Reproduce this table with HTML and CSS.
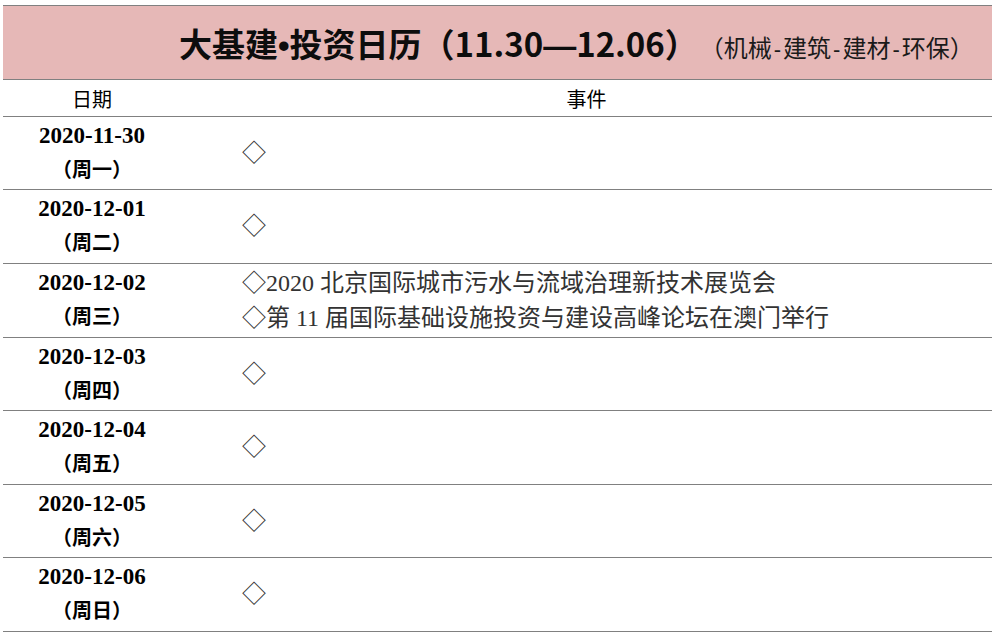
FILE: index.html
```html
<!DOCTYPE html>
<html lang="zh-CN">
<head>
<meta charset="utf-8">
<title>大基建•投资日历</title>
<link rel="stylesheet" href="styles.css">
</head>
<body>
<div class="sheet">
  <div class="title-row">
    <span class="title">大基建<span class="latin">•</span>投资日历（11.30<span class="latin">—</span>12.06）</span>
    <span class="subtitle">（机械<span class="hy">-</span>建筑<span class="hy">-</span>建材<span class="hy">-</span>环保）</span>
  </div>
  <div class="row head">
    <div class="c-date">日期</div>
    <div class="c-event center">事件</div>
  </div>
  <div class="row h73">
    <div class="c-date"><div class="d">2020-11-30</div><div class="w">（周一）</div></div>
    <div class="c-event"><div class="e">◇</div></div>
  </div>
  <div class="row h74">
    <div class="c-date"><div class="d">2020-12-01</div><div class="w">（周二）</div></div>
    <div class="c-event"><div class="e">◇</div></div>
  </div>
  <div class="row h74">
    <div class="c-date"><div class="d">2020-12-02</div><div class="w">（周三）</div></div>
    <div class="c-event"><div class="e">◇2020 北京国际城市污水与流域治理新技术展览会</div><div class="e">◇第 11 届国际基础设施投资与建设高峰论坛在澳门举行</div></div>
  </div>
  <div class="row h73">
    <div class="c-date"><div class="d">2020-12-03</div><div class="w">（周四）</div></div>
    <div class="c-event"><div class="e">◇</div></div>
  </div>
  <div class="row h74">
    <div class="c-date"><div class="d">2020-12-04</div><div class="w">（周五）</div></div>
    <div class="c-event"><div class="e">◇</div></div>
  </div>
  <div class="row h73">
    <div class="c-date"><div class="d">2020-12-05</div><div class="w">（周六）</div></div>
    <div class="c-event"><div class="e">◇</div></div>
  </div>
  <div class="row h74">
    <div class="c-date"><div class="d">2020-12-06</div><div class="w">（周日）</div></div>
    <div class="c-event"><div class="e">◇</div></div>
  </div>
</div>
</body>
</html>
```

FILE: styles.css
```css
html, body {
  margin: 0;
  padding: 0;
  background: #ffffff;
}
.sheet {
  width: 989px;
  margin: 5px 0 0 3px;
  font-family: "Liberation Serif", "Noto Sans CJK SC", serif;
  color: #000;
}
.title-row {
  box-sizing: border-box;
  height: 75px;
  border-top: 1px solid #808080;
  border-bottom: 1px solid #808080;
  background: #e6b8b7;
  display: flex;
  align-items: baseline;
  padding: 13px 0 0 176px;
}
.title {
  font-family: "Noto Sans CJK SC", sans-serif;
  font-weight: 700;
  font-size: 33px;
  color: #0d0d0d;
}
.title .latin {
  font-family: "Liberation Sans", sans-serif;
}
.subtitle {
  font-family: "Noto Sans CJK SC", sans-serif;
  font-size: 24px;
  color: #1a1a1a;
  margin-left: 2px;
}
.subtitle .hy {
  font-family: "Liberation Sans", sans-serif;
  font-size: 22px;
  margin: 0 2px;
}
.row {
  box-sizing: border-box;
  display: flex;
  border-bottom: 1px solid #808080;
}
.head {
  height: 37px;
  align-items: center;
  font-family: "Noto Sans CJK SC", sans-serif;
  font-size: 20px;
}
.h73 { height: 73px; }
.h74 { height: 74px; }
.c-date {
  width: 178px;
  flex: none;
  display: flex;
  flex-direction: column;
  align-items: center;
  justify-content: center;
}
.c-event {
  flex: 1;
  display: flex;
  flex-direction: column;
  justify-content: center;
  padding-left: 61px;
}
.c-event.center {
  align-items: center;
  padding-left: 0;
}
.d {
  font-family: "Liberation Serif", serif;
  font-weight: 700;
  font-size: 23px;
  line-height: 33px;
  margin-top: -3px;
}
.w {
  font-family: "Noto Sans CJK SC", sans-serif;
  font-weight: 700;
  font-size: 20px;
  line-height: 33px;
}
.e {
  font-family: "Liberation Serif", "Noto Sans CJK SC", serif;
  font-size: 24px;
  line-height: 35px;
  color: #333333;
  white-space: nowrap;
}
```
